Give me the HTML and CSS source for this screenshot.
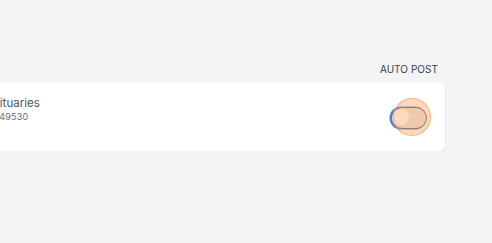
FILE: index.html
```html
<!DOCTYPE html>
<html>
<head>
<meta charset="utf-8">
<link rel="stylesheet" href="styles.css">
</head>
<body>
<div class="page">
  <div class="header">
    <span class="col-label">AUTO POST</span>
  </div>
  <div class="card">
    <div class="info">
      <div class="title">Obituaries</div>
      <div class="sub">#1249530</div>
    </div>
    <div class="toggle-wrap">
      <button class="toggle" type="button" aria-pressed="false">
        <span class="knob"></span>
      </button>
      <span class="halo"></span>
    </div>
  </div>
</div>
</body>
</html>
```
FILE: styles.css
```css
html, body {
  margin: 0;
  padding: 0;
  background: #f3f4f6;
  font-family: Inter, "Noto Sans", sans-serif;
  overflow: hidden;
}
.page {
  margin-left: -40px;
  margin-right: 47px;
  padding-top: 62px;
}
.header {
  display: flex;
  justify-content: flex-end;
  padding-right: 7px;
  margin-bottom: 5px;
}
.col-label {
  font-size: 10px;
  line-height: 15px;
  color: #374151;
  letter-spacing: 0.05px;
}
.card {
  box-sizing: border-box;
  height: 69px;
  background: #fff;
  border-radius: 6px;
  box-shadow: 0 1px 3px rgba(0,0,0,0.08), 0 1px 2px rgba(0,0,0,0.04);
  display: flex;
  align-items: flex-start;
  justify-content: space-between;
  padding: 13px 18px 12px 24px;
}
.title {
  font-size: 11.5px;
  line-height: 16px;
  color: #4b5563;
}
.sub {
  font-size: 9px;
  line-height: 11px;
  color: #6b7280;
  letter-spacing: 0.2px;
}
.toggle-wrap {
  position: relative;
  align-self: center;
  margin-top: 1px;
  width: 36px;
  height: 22px;
}
.toggle {
  box-sizing: border-box;
  display: block;
  width: 36px;
  height: 22px;
  padding: 0;
  margin: 0;
  border-radius: 11px;
  border: 1.5px solid #6b7280;
  background: #e5e7eb;
  box-shadow: -1px 0 0 0.5px #3b82f6;
  position: relative;
}
.knob {
  position: absolute;
  left: 1px;
  top: 1.5px;
  width: 16px;
  height: 16px;
  border-radius: 50%;
  background: #fff;
}
.halo {
  position: absolute;
  left: 2px;
  top: -9px;
  width: 38px;
  height: 38px;
  border-radius: 50%;
  background: rgba(251, 146, 60, 0.35);
  border: 1.5px solid rgba(251, 146, 60, 0.6);
  box-sizing: border-box;
}
```
